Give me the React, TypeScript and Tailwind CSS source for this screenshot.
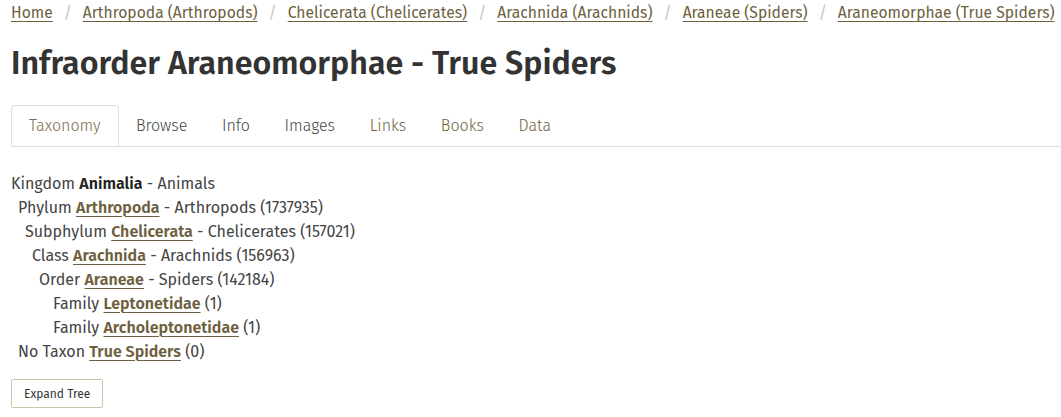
import React from 'react'

const crumbs = [
  'Home',
  'Arthropoda (Arthropods)',
  'Chelicerata (Chelicerates)',
  'Arachnida (Arachnids)',
  'Araneae (Spiders)',
  'Araneomorphae (True Spiders)',
]

const tabs = [
  { label: 'Taxonomy', active: true, link: true },
  { label: 'Browse', active: false, link: false },
  { label: 'Info', active: false, link: false },
  { label: 'Images', active: false, link: false },
  { label: 'Links', active: false, link: true },
  { label: 'Books', active: false, link: true },
  { label: 'Data', active: false, link: true },
]

interface Row {
  level: number
  rank: string
  name: string
  rest: string
  link: boolean
}

const rows: Row[] = [
  { level: 0, rank: 'Kingdom', name: 'Animalia', rest: ' - Animals', link: false },
  { level: 1, rank: 'Phylum', name: 'Arthropoda', rest: ' - Arthropods (1737935)', link: true },
  { level: 2, rank: 'Subphylum', name: 'Chelicerata', rest: ' - Chelicerates (157021)', link: true },
  { level: 3, rank: 'Class', name: 'Arachnida', rest: ' - Arachnids (156963)', link: true },
  { level: 4, rank: 'Order', name: 'Araneae', rest: ' - Spiders (142184)', link: true },
  { level: 6, rank: 'Family', name: 'Leptonetidae', rest: ' (1)', link: true },
  { level: 6, rank: 'Family', name: 'Archoleptonetidae', rest: ' (1)', link: true },
  { level: 1, rank: 'No Taxon', name: 'True Spiders', rest: ' (0)', link: true },
]

const indent = ['pl-0', 'pl-[7px]', 'pl-[14px]', 'pl-[21px]', 'pl-[28px]', 'pl-[35px]', 'pl-[42px]']

export default function App() {
  return (
    <div className="min-h-screen bg-white px-[11px] text-[16px] text-[#444] font-['Fira_Sans','Open_Sans',sans-serif]">
      {/* breadcrumb */}
      <nav className="flex items-center h-[26px] leading-[24px] whitespace-nowrap text-[15.65px]">
        {crumbs.map((c, i) => (
          <React.Fragment key={c}>
            {i > 0 && <span className="px-[11px] text-[#c4c4c4]">/</span>}
            <a href="#" className="text-[#6e5f40] underline underline-offset-[3px] decoration-1">
              {c}
            </a>
          </React.Fragment>
        ))}
      </nav>

      <h1 className="mt-[20px] text-[32.2px] leading-[36px] font-semibold text-[#333]">
        Infraorder Araneomorphae - True Spiders
      </h1>

      {/* tabs */}
      <div className="mt-[23px] flex border-b border-[#dedede] mr-[-11px] font-light">
        {tabs.map(t => (
          <div
            key={t.label}
            className={
              t.active
                ? 'h-[41px] px-[17px] flex items-center rounded-t-[4px] border border-[#dedede] border-b-white mb-[-1px] bg-white text-[#7a6a4a]'
                : 'h-[41px] px-[17.35px] flex items-center ' + (t.link ? 'text-[#6e5f40]' : 'text-[#444]')
            }
          >
            {t.label}
          </div>
        ))}
      </div>

      {/* tree */}
      <div className="mt-[25px] leading-[24px]">
        {rows.map((r, i) => (
          <div key={i} className={indent[r.level]}>
            {r.rank}{' '}
            {r.link ? (
              <a href="#" className="font-semibold text-[#6e5f40] underline underline-offset-[3px] decoration-1">
                {r.name}
              </a>
            ) : (
              <b className="font-semibold text-[#222]">{r.name}</b>
            )}
            {r.rest}
          </div>
        ))}
      </div>

      <button className="mt-[15px] h-[29px] px-[12px] border border-[#cfc6a8] rounded-[2px] bg-white text-[12px] text-[#333]">
        Expand Tree
      </button>
    </div>
  )
}
